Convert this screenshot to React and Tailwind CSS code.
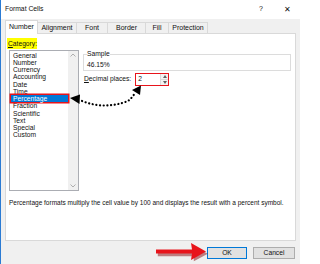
const categories = [
  "General",
  "Number",
  "Currency",
  "Accounting",
  "Date",
  "Time",
  "Percentage",
  "Fraction",
  "Scientific",
  "Text",
  "Special",
  "Custom",
];

const tabs = [
  { label: "Number", w: "w-[33px]" },
  { label: "Alignment", w: "w-[39px]" },
  { label: "Font", w: "w-[31px]" },
  { label: "Border", w: "w-[38px]" },
  { label: "Fill", w: "w-[23px]" },
  { label: "Protection", w: "w-[39px]" },
];

function Chevron({ up }) {
  return (
    <svg width="6" height="4" viewBox="0 0 6 4">
      <path
        d={up ? "M0.5 3.5 L3 1 L5.5 3.5" : "M0.5 0.5 L3 3 L5.5 0.5"}
        fill="none"
        stroke="#a6a6a6"
        strokeWidth="0.9"
      />
    </svg>
  );
}

function TabRow() {
  return (
    <div className="flex items-end h-[14px] pl-[4px] text-[7px]">
      {tabs.map((t, i) =>
        i === 0 ? (
          <div
            key={t.label}
            className={`${t.w} h-[14px] -mb-px bg-white border border-b-0 border-[#d9d9d9] flex items-center justify-center relative z-10`}
          >
            {t.label}
          </div>
        ) : (
          <div
            key={t.label}
            className={`${t.w} h-[11px] bg-[#f0f0f0] border border-l-0 border-b-0 border-[#d9d9d9] flex items-center justify-center`}
          >
            {t.label}
          </div>
        )
      )}
    </div>
  );
}

function CategoryList() {
  return (
    <div className="w-[73px]">
      <div className="mt-[4px] ml-[1px] h-[11px] leading-[11px] w-[30px] bg-[#ffff00] px-[1px]">
        <span className="underline">C</span>ategory:
      </div>
      <div className="mt-[1px] ml-[3px] w-[70px] h-[141px] border border-[#abadb3] flex bg-white">
        <div className="flex-1 pt-[0.5px] pl-px">
          {categories.map((c) =>
            c === "Percentage" ? (
              <div
                key={c}
                className="h-[7.27px] leading-[7.27px] pl-[2px] bg-[#0078d7] text-white ring-[1.5px] ring-[#e8141b] relative z-10"
              >
                {c}
              </div>
            ) : (
              <div key={c} className="h-[7.27px] leading-[7.27px] pl-[2px]">
                {c}
              </div>
            )
          )}
        </div>
        <div className="w-[10px] bg-[#f0f0f0] flex flex-col items-center justify-between py-[2px]">
          <Chevron up />
          <Chevron />
        </div>
      </div>
    </div>
  );
}

function Spinner() {
  return (
    <div className="ml-[4px] w-[34px] h-[13px] border-[1.5px] border-[#e8141b] bg-white flex items-center">
      <span className="flex-1 pl-[2px]">2</span>
      <div className="w-[8px] h-full flex flex-col border-l border-[#d9d9d9] bg-[#f3f3f3]">
        <div className="flex-1 flex items-center justify-center border-b border-[#d9d9d9]">
          <svg width="4" height="3" viewBox="0 0 4 3">
            <path d="M0 3 L2 0 L4 3 Z" fill="#606060" />
          </svg>
        </div>
        <div className="flex-1 flex items-center justify-center">
          <svg width="4" height="3" viewBox="0 0 4 3">
            <path d="M0 0 L2 3 L4 0 Z" fill="#606060" />
          </svg>
        </div>
      </div>
    </div>
  );
}

function Overlay() {
  return (
    <svg
      className="absolute left-0 top-0 pointer-events-none"
      width="300"
      height="264"
      viewBox="0 0 300 264"
    >
      {/* dotted double arrow */}
      <path
        d="M81 101 Q104 110 127 101 Q131 98 134 93"
        fill="none"
        stroke="#000"
        strokeWidth="2.2"
        strokeLinecap="round"
        strokeDasharray="0.1 3.6"
      />
      <path d="M69 98 L79 94.5 L78.5 104 Z" fill="#000" />
      <path d="M140 85.5 L139 95 L131 90 Z" fill="#000" />
      {/* red arrow */}
      <path d="M156 251 L192 251 L192 245 L206 252.5 L192 260 L192 255 L156 255 Z" fill="#8b0a0e" opacity="0.5" transform="translate(0.8 1.2)" />
      <path d="M155 249.5 L191 249.5 L190 243 L205 251.5 L190 260 L191 253.5 L155 253.5 Z" fill="#e8141b" />
    </svg>
  );
}

export default function App() {
  return (
    <div className="relative w-[300px] h-[264px] overflow-hidden bg-[#f0f0f0] border-l border-[#2b7bd3] text-[6.7px] text-[#111] font-['Liberation_Sans',Arial,sans-serif]">
      {/* Title bar */}
      <div className="h-[19px] bg-white flex items-center pl-[4px] text-[6.8px]">
        <span>Format Cells</span>
        <span className="ml-auto mr-[21px] text-[7px]">?</span>
        <span className="mr-[9px] text-[8px] leading-none">✕</span>
      </div>

      <TabRow />

      {/* Tab page */}
      <div className="ml-[4px] w-[291px] h-[208px] bg-white border border-[#d9d9d9]">
        <div className="flex">
          <CategoryList />
          <div className="ml-[4px] flex-1 mr-[4px]">
            <fieldset className="mt-[16px] border border-[#dcdcdc] pl-[3px] pb-[1px]">
              <legend className="leading-[8px] px-0">Sample</legend>
              <div className="leading-[8px] mt-[3px]">46.15%</div>
            </fieldset>
            <div className="mt-[2px] flex items-center h-[13px] pl-[1px]">
              <span>
                <span className="underline">D</span>ecimal places:
              </span>
              <Spinner />
            </div>
          </div>
        </div>
        <div className="mt-[8px] ml-[3px] leading-[8px] text-[6.5px]">
          Percentage formats multiply the cell value by 100 and displays the result with a percent symbol.
        </div>
      </div>

      {/* Buttons */}
      <div className="mt-[6px] flex justify-end gap-[6px] pr-[5px]">
        <button className="w-[40px] h-[12px] bg-[#e1e1e1] border-[1.5px] border-[#0078d7] flex items-center justify-center">
          OK
        </button>
        <button className="w-[42px] h-[12px] bg-[#e1e1e1] border border-[#adadad] flex items-center justify-center">
          Cancel
        </button>
      </div>

      <Overlay />
    </div>
  );
}
